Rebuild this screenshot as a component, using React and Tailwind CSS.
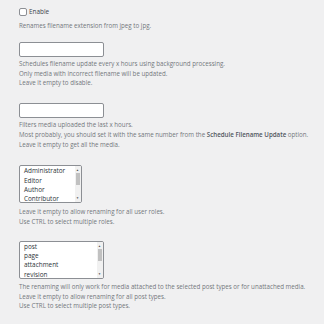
const roles = ["Administrator", "Editor", "Author", "Contributor"];
const postTypes = ["post", "page", "attachment", "revision"];

function Desc({ children }) {
  return <p className="text-[6.2px] leading-[9.75px] text-[#73777c]">{children}</p>;
}

function ListBox({ items, width }) {
  return (
    <div className={`flex h-[38px] ${width} overflow-hidden rounded-[2px] border border-[#8c8f94] bg-white`}>
      <div className="flex flex-1 flex-col pl-[4px]">
        {items.map((item) => (
          <div key={item} className="text-[6.4px] leading-[9.3px] text-[#2c3338]">
            {item}
          </div>
        ))}
      </div>
      <div className="flex w-[6px] flex-col items-center bg-[#f1f1f1] pr-[1px]">
        <span className="mt-[2px] text-[3px] leading-[4px] text-[#505050]">▲</span>
        <div className="mt-[1px] h-[12px] w-[4px] bg-[#c1c1c1]" />
        <div className="flex-1" />
        <span className="mb-[2px] text-[3px] leading-[4px] text-[#505050]">▼</span>
      </div>
    </div>
  );
}

export default function App() {
  return (
    <div
      className="h-[324px] w-[324px] overflow-hidden bg-[#f0f0f1] pl-[19px]"
      style={{ fontFamily: '"Open Sans", "Noto Sans", sans-serif' }}
    >
      <div className="flex items-center gap-[2px] pt-[8px]">
        <div className="h-[8px] w-[8px] rounded-[2px] border border-[#8c8f94] bg-white" />
        <span className="text-[6.4px] leading-[8px] text-[#3c434a]">Enable</span>
      </div>
      <div className="mt-[5px]">
        <Desc>Renames filename extension from jpeg to jpg.</Desc>
      </div>

      <div className="mt-[11px] h-[15px] w-[85px] rounded-[2px] border border-[#8c8f94] bg-white" />
      <div className="mt-[2px]">
        <Desc>Schedules filename update every x hours using background processing.</Desc>
        <Desc>Only media with incorrect filename will be updated.</Desc>
        <Desc>Leave it empty to disable.</Desc>
      </div>

      <div className="mt-[15px] h-[15px] w-[85px] rounded-[2px] border border-[#8c8f94] bg-white" />
      <div className="mt-[2px]">
        <Desc>Filters media uploaded the last x hours.</Desc>
        <Desc>
          Most probably, you should set it with the same number from the{" "}
          <strong className="font-semibold text-[#50575e]">Schedule Filename Update</strong> option.
        </Desc>
        <Desc>Leave it empty to get all the media.</Desc>
      </div>

      <div className="mt-[16px]">
        <ListBox items={roles} width="w-[63px]" />
      </div>
      <div className="mt-[4px]">
        <Desc>Leave it empty to allow renaming for all user roles.</Desc>
        <Desc>Use CTRL to select multiple roles.</Desc>
      </div>

      <div className="mt-[14px]">
        <ListBox items={postTypes} width="w-[85px]" />
      </div>
      <div className="mt-[3px]">
        <Desc>The renaming will only work for media attached to the selected post types or for unattached media.</Desc>
        <Desc>Leave it empty to allow renaming for all post types.</Desc>
        <Desc>Use CTRL to select multiple post types.</Desc>
      </div>
    </div>
  );
}
